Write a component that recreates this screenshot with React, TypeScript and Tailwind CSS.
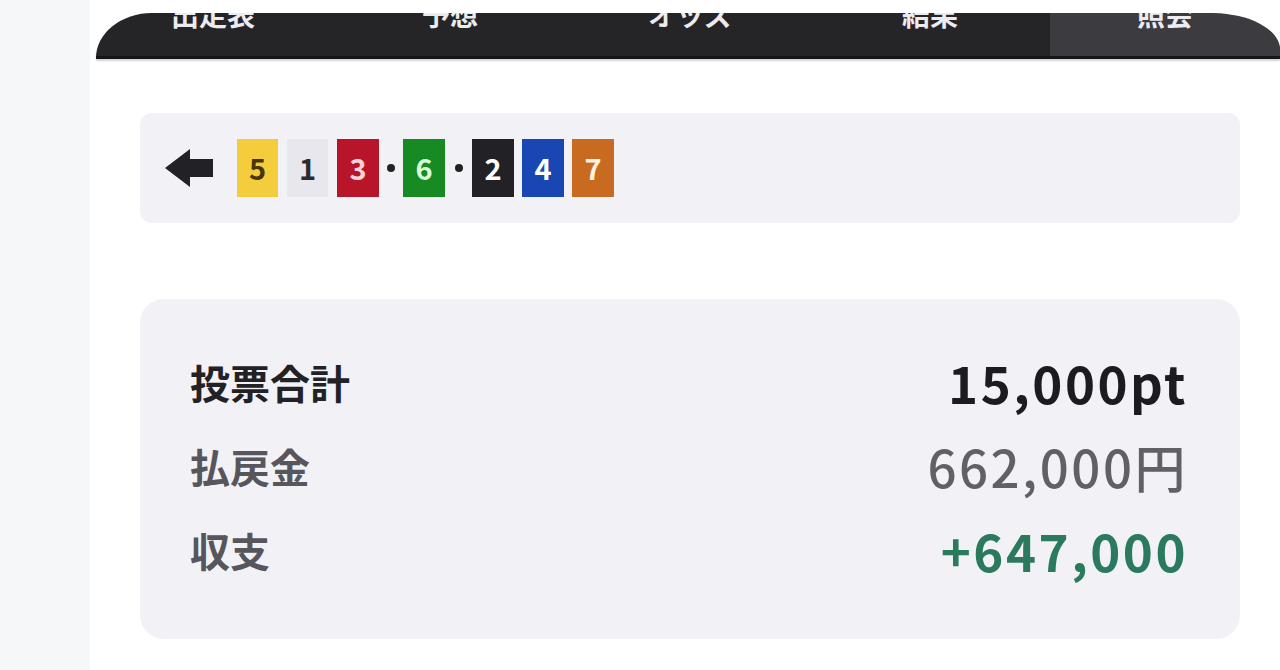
import React from "react";

const tabs = ["出走表", "予想", "オッズ", "結果", "照会"];

type Horse = { n: string; bg: string; fg: string; w: string };
type Spacer = { sp: string; dot?: boolean };

const horses: (Horse | Spacer)[] = [
  { n: "5", bg: "bg-[#f4cd3c]", fg: "text-[#4a3508]", w: "w-[41px]" },
  { sp: "w-[9px]" },
  { n: "1", bg: "bg-[#e7e7ed]", fg: "text-[#2a2a30]", w: "w-[41px]" },
  { sp: "w-[9px]" },
  { n: "3", bg: "bg-[#b8152b]", fg: "text-[#ffd4d8]", w: "w-[42px]" },
  { sp: "w-[24px]", dot: true },
  { n: "6", bg: "bg-[#178a24]", fg: "text-[#d8ffd8]", w: "w-[42px]" },
  { sp: "w-[27px]", dot: true },
  { n: "2", bg: "bg-[#222226]", fg: "text-white", w: "w-[42px]" },
  { sp: "w-[8px]" },
  { n: "4", bg: "bg-[#1846b2]", fg: "text-white", w: "w-[42px]" },
  { sp: "w-[8px]" },
  { n: "7", bg: "bg-[#c86a20]", fg: "text-[#fff1e0]", w: "w-[42px]" },
];

const jp = "font-['Noto_Sans_CJK_JP','Noto_Sans',sans-serif]";

function BackArrow() {
  return (
    <svg width="48" height="38" viewBox="0 0 48 38" className="shrink-0">
      <path d="M0 19 L25 0 L25 10 L48 10 L48 28 L25 28 L25 38 Z" fill="#222226" />
    </svg>
  );
}

export default function App() {
  return (
    <div className={`flex h-[670px] w-full overflow-hidden bg-[#f6f7f9] ${jp}`}>
      <div className="w-[90px] shrink-0" />
      <div className="flex flex-1 flex-col bg-white pt-[13px]">
        {/* tab bar, labels clipped at the top as in the capture */}
        <div className="ml-[6px] flex h-[46px] overflow-hidden rounded-tl-[56px_45px] rounded-tr-[72px_38px] border-b-[3px] border-[#161618] bg-[#252528] shadow-[0_2px_2px_rgba(0,0,0,0.18)]">
          {tabs.map((t, i) => (
            <div
              key={t}
              className={`flex items-start justify-center ${i === 4 ? "flex-1 bg-[#3b3b40]" : i === 0 ? "w-[234px]" : "w-[240px]"}`}
            >
              <span className="-mt-[13px] text-[28px] font-bold leading-none text-[#ececf0]">{t}</span>
            </div>
          ))}
        </div>

        {/* selected horses */}
        <div className="ml-[50px] mr-[40px] mt-[54px] flex h-[110px] items-center rounded-[12px] bg-[#f2f2f6] pl-[25px]">
          <BackArrow />
          <div className="ml-[24px] flex items-center">
            {horses.map((h, i) => {
              if ("sp" in h)
                return (
                  <div key={i} className={`flex items-center justify-center ${h.sp}`}>
                    {h.dot && <div className="h-[8px] w-[8px] rounded-full bg-[#222]" />}
                  </div>
                );
              return (
                <div
                  key={i}
                  className={`flex h-[58px] items-center justify-center ${h.w} ${h.bg} ${h.fg} text-[29px] font-bold`}
                >
                  {h.n}
                </div>
              );
            })}
          </div>
        </div>

        {/* totals */}
        <div className="ml-[50px] mr-[40px] mt-[76px] flex h-[340px] flex-col rounded-[24px] bg-[#f2f2f6] pl-[50px] pr-[52px] pt-[41px]">
          <div className="flex h-[84px] items-center justify-between">
            <span className="text-[40px] font-bold text-[#222226]">投票合計</span>
            <span className="text-[51px] font-bold tracking-[2.5px] text-[#1c1c20]">15,000pt</span>
          </div>
          <div className="flex h-[84px] items-center justify-between">
            <span className="text-[40px] font-semibold text-[#56565c]">払戻金</span>
            <span className="text-[51px] font-medium tracking-[2.5px] text-[#606066]">662,000円</span>
          </div>
          <div className="flex h-[84px] items-center justify-between">
            <span className="text-[40px] font-semibold text-[#56565c]">収支</span>
            <span className="text-[51px] font-bold tracking-[2.5px] text-[#2b7a5e]">+647,000</span>
          </div>
        </div>
      </div>
    </div>
  );
}
